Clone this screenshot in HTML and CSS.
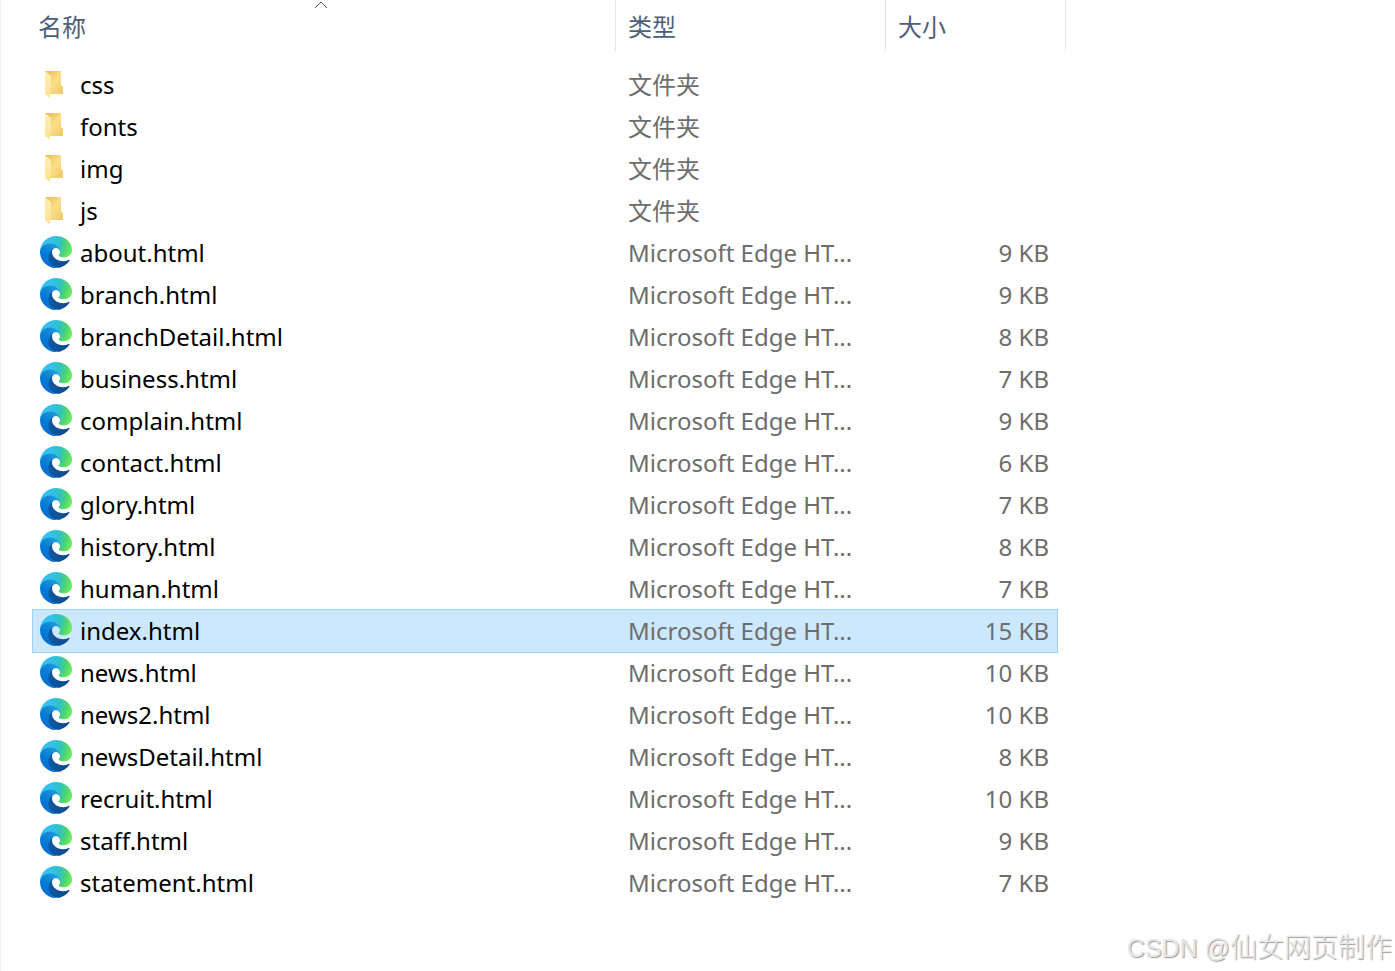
FILE: index.html
```
<!DOCTYPE html>
<html lang="zh-CN">
<head>
<meta charset="utf-8">
<title>文件列表</title>
<link rel="stylesheet" href="styles.css">
</head>
<body>
<svg class="sprite" aria-hidden="true">
  <defs>
    <linearGradient id="folder-back" x1="0" y1="0" x2="1" y2="1"><stop offset="0" stop-color="#e6b850"/><stop offset="0.5" stop-color="#fbdf87"/><stop offset="1" stop-color="#efc765"/></linearGradient>
    <linearGradient id="folder-front" x1="0" y1="0" x2="0" y2="1"><stop offset="0" stop-color="#ffefb6"/><stop offset="1" stop-color="#ffe291"/></linearGradient>
    <linearGradient id="edge-navy" gradientUnits="userSpaceOnUse" x1="60" y1="177" x2="235" y2="177"><stop offset="0" stop-color="#0c59a4"/><stop offset="1" stop-color="#114a8b"/></linearGradient>
    <linearGradient id="edge-blue" gradientUnits="userSpaceOnUse" x1="150" y1="90" x2="45" y2="225"><stop offset="0" stop-color="#1b9de2"/><stop offset="0.3" stop-color="#1488d4"/><stop offset="0.7" stop-color="#0078d7"/><stop offset="1" stop-color="#0b6fcb"/></linearGradient>
    <radialGradient id="edge-green" gradientUnits="userSpaceOnUse" cx="25" cy="46" r="225"><stop offset="0" stop-color="#35c1f1"/><stop offset="0.3" stop-color="#34c1ed"/><stop offset="0.6" stop-color="#2fc2c0"/><stop offset="0.85" stop-color="#52d470"/><stop offset="1" stop-color="#66eb5e"/></radialGradient>
    <symbol id="folder" viewBox="0 0 32 32">
      <path d="M5 3H21V17L23 19V26H5Z" fill="url(#folder-back)"/>
      <path d="M5 3L11 8V23L10 24V30L5 26Z" fill="url(#folder-front)"/>
    </symbol>
    <symbol id="edge" viewBox="0 0 256 256">
      <path fill="url(#edge-navy)" d="M231 190.500c-3.400 1.800-6.900 3.400-10.500 4.700a101.800 101.800 0 0 1-35.900 6.400c-47.300 0-88.500-32.500-88.500-74.300 0-11.500 6.400-21.900 16.400-27.300-42.800 1.800-53.800 46.400-53.800 72.500 0 74 68.100 81.400 82.800 81.400 7.900 0 19.800-2.300 27-4.600l1.300-.4a128.300 128.300 0 0 0 66.600-52.800 4 4 0 0 0-5.400-5.600Z"/>
      <path fill="url(#edge-blue)" d="M105.700 241.400a79.200 79.200 0 0 1-22.700-21.300 80.700 80.700 0 0 1 29.500-120c3.200-1.500 8.500-4.100 15.600-4a32.400 32.400 0 0 1 25.700 13 31.900 31.900 0 0 1 6.300 18.700c0-.2 24.500-79.600-80-79.600-43.900 0-80 41.600-80 78.200a130.200 130.200 0 0 0 12.100 56 128 128 0 0 0 156.400 67 75.500 75.500 0 0 1-62.800-8Z"/>
      <path fill="url(#edge-green)" d="M152.300 148.900c-.9 1-3.400 2.500-3.400 5.600 0 2.600 1.700 5.200 4.800 7.300 14.300 10 41.400 8.600 41.500 8.600 10.700 0 21.100-2.900 30.300-8.300a61.400 61.400 0 0 0 30.400-52.900c.3-22.400-8-37.300-11.300-43.900C223.500 23.900 177.700 0 128 0A128 128 0 0 0 0 126.200c.5-36.500 36.800-66 80-66 3.500 0 23.500.3 42 10a72.600 72.600 0 0 1 30.900 29.300c6.100 10.600 7.200 24.100 7.200 29.500s-2.700 13.300-7.800 19.900Z"/>
    </symbol>
  </defs>
</svg>
<main class="explorer">
  <table class="files">
    <thead>
      <tr class="head">
        <th scope="col" aria-sort="ascending"><button class="sort" type="button">名称</button><svg class="caret" viewBox="0 0 14 8" aria-hidden="true"><path d="M1 7L7 1L13 7"/></svg></th>
        <th scope="col"><button class="sort" type="button">类型</button></th>
        <th scope="col"><button class="sort" type="button">大小</button></th>
      </tr>
    </thead>
    <tbody>
      <tr class="row"><td class="name"><svg class="icon"><use href="#folder"/></svg>css</td><td>文件夹</td><td class="size"></td></tr>
      <tr class="row"><td class="name"><svg class="icon"><use href="#folder"/></svg>fonts</td><td>文件夹</td><td class="size"></td></tr>
      <tr class="row"><td class="name"><svg class="icon"><use href="#folder"/></svg>img</td><td>文件夹</td><td class="size"></td></tr>
      <tr class="row"><td class="name"><svg class="icon"><use href="#folder"/></svg>js</td><td>文件夹</td><td class="size"></td></tr>
      <tr class="row"><td class="name"><svg class="icon"><use href="#edge"/></svg>about.html</td><td>Microsoft Edge HT...</td><td class="size">9 KB</td></tr>
      <tr class="row"><td class="name"><svg class="icon"><use href="#edge"/></svg>branch.html</td><td>Microsoft Edge HT...</td><td class="size">9 KB</td></tr>
      <tr class="row"><td class="name"><svg class="icon"><use href="#edge"/></svg>branchDetail.html</td><td>Microsoft Edge HT...</td><td class="size">8 KB</td></tr>
      <tr class="row"><td class="name"><svg class="icon"><use href="#edge"/></svg>business.html</td><td>Microsoft Edge HT...</td><td class="size">7 KB</td></tr>
      <tr class="row"><td class="name"><svg class="icon"><use href="#edge"/></svg>complain.html</td><td>Microsoft Edge HT...</td><td class="size">9 KB</td></tr>
      <tr class="row"><td class="name"><svg class="icon"><use href="#edge"/></svg>contact.html</td><td>Microsoft Edge HT...</td><td class="size">6 KB</td></tr>
      <tr class="row"><td class="name"><svg class="icon"><use href="#edge"/></svg>glory.html</td><td>Microsoft Edge HT...</td><td class="size">7 KB</td></tr>
      <tr class="row"><td class="name"><svg class="icon"><use href="#edge"/></svg>history.html</td><td>Microsoft Edge HT...</td><td class="size">8 KB</td></tr>
      <tr class="row"><td class="name"><svg class="icon"><use href="#edge"/></svg>human.html</td><td>Microsoft Edge HT...</td><td class="size">7 KB</td></tr>
      <tr class="row selected"><td class="name"><svg class="icon"><use href="#edge"/></svg>index.html</td><td>Microsoft Edge HT...</td><td class="size">15 KB</td></tr>
      <tr class="row"><td class="name"><svg class="icon"><use href="#edge"/></svg>news.html</td><td>Microsoft Edge HT...</td><td class="size">10 KB</td></tr>
      <tr class="row"><td class="name"><svg class="icon"><use href="#edge"/></svg>news2.html</td><td>Microsoft Edge HT...</td><td class="size">10 KB</td></tr>
      <tr class="row"><td class="name"><svg class="icon"><use href="#edge"/></svg>newsDetail.html</td><td>Microsoft Edge HT...</td><td class="size">8 KB</td></tr>
      <tr class="row"><td class="name"><svg class="icon"><use href="#edge"/></svg>recruit.html</td><td>Microsoft Edge HT...</td><td class="size">10 KB</td></tr>
      <tr class="row"><td class="name"><svg class="icon"><use href="#edge"/></svg>staff.html</td><td>Microsoft Edge HT...</td><td class="size">9 KB</td></tr>
      <tr class="row"><td class="name"><svg class="icon"><use href="#edge"/></svg>statement.html</td><td>Microsoft Edge HT...</td><td class="size">7 KB</td></tr>
    </tbody>
  </table>
  <footer class="watermark"><span class="site">CSDN @</span>仙女网页制作</footer>
</main>
</body>
</html>
```

FILE: styles.css
```
* { box-sizing: border-box; }

body {
  margin: 0;
  background: #fff;
  color: #6d6d6d;
  font-family: "Noto Sans", "Noto Sans CJK SC", sans-serif;
  font-size: 24px;
  line-height: 42px;
}

.sprite { position: absolute; width: 0; height: 0; }

.explorer {
  display: flex;
  flex-direction: column;
  min-height: 100vh;
  border-left: 1px solid #f5f5f5;
}

.files, .files thead, .files tbody { display: block; }

.head, .row { display: grid; }

.head {
  grid-template-columns: 590px 270px 180px;
  margin-left: 25px;
  height: 51px;
}

.head th {
  position: relative;
  padding: 0;
  border-right: 1px solid #e5e5e5;
  font-weight: 400;
  text-align: left;
}

.sort {
  width: 100%;
  padding: 6px 12px 3px;
  border: 0;
  background: none;
  color: #4c607a;
  font: inherit;
  line-height: 42px;
  text-align: left;
}

.caret {
  position: absolute;
  top: 1px;
  left: 50%;
  width: 14px;
  height: 8px;
  margin-left: -7px;
  fill: none;
  stroke: #555;
}

.files tbody { padding: 13px 0 0 32px; }

.row {
  grid-template-columns: 583px 270px 171px;
  width: max-content;
}

.row td {
  padding: 0 12px;
  white-space: nowrap;
}

.row td.name {
  display: flex;
  align-items: center;
  gap: 8px;
  padding: 0 7px;
  color: #000;
}

.row td.size { padding: 0 8px; text-align: right; }

.selected {
  background: #cce8ff;
  outline: 1px solid #99d1ff;
}

.icon { width: 32px; height: 32px; margin-bottom: 2px; flex: none; }

.watermark {
  margin-top: auto;
  padding: 0 3px 2px 0;
  color: #e6e6e6;
  font-family: "Liberation Sans", "Noto Sans CJK SC", sans-serif;
  font-size: 27px;
  font-weight: 300;
  text-align: right;
  text-shadow: 1px 1px 1px #999;
}

.site { font-size: 25px; }
```
